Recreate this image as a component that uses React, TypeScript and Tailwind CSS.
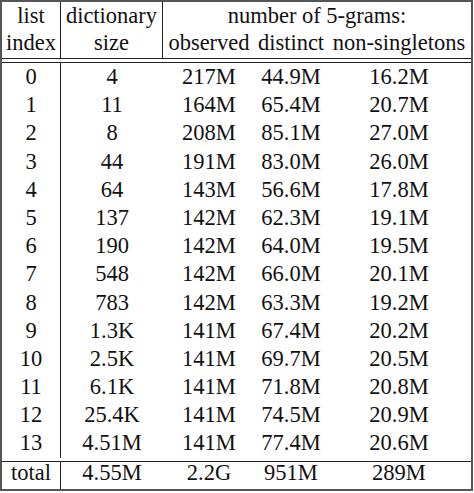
import React from "react";

const rows: string[][] = [
  ["0", "4", "217M", "44.9M", "16.2M"],
  ["1", "11", "164M", "65.4M", "20.7M"],
  ["2", "8", "208M", "85.1M", "27.0M"],
  ["3", "44", "191M", "83.0M", "26.0M"],
  ["4", "64", "143M", "56.6M", "17.8M"],
  ["5", "137", "142M", "62.3M", "19.1M"],
  ["6", "190", "142M", "64.0M", "19.5M"],
  ["7", "548", "142M", "66.0M", "20.1M"],
  ["8", "783", "142M", "63.3M", "19.2M"],
  ["9", "1.3K", "141M", "67.4M", "20.2M"],
  ["10", "2.5K", "141M", "69.7M", "20.5M"],
  ["11", "6.1K", "141M", "71.8M", "20.8M"],
  ["12", "25.4K", "141M", "74.5M", "20.9M"],
  ["13", "4.51M", "141M", "77.4M", "20.6M"],
];

export default function App() {
  return (
    <div className="w-[474px] h-[493px] bg-white text-[#111] text-[22.5px] font-[family-name:'Liberation_Serif',serif]">
      <div className="w-[473px] h-[491px] border-2 border-[#555] flex flex-col">
        {/* header */}
        <div className="flex h-[57px] border-b border-[#222] leading-[27px] shrink-0">
          <div className="w-[59px] border-r border-[#222] flex flex-col items-center">
            <span>list</span>
            <span>index</span>
          </div>
          <div className="w-[102px] border-r border-[#222] flex flex-col items-center">
            <span>dictionary</span>
            <span>size</span>
          </div>
          <div className="flex-1 flex flex-col">
            <div className="text-center">number of 5-grams:</div>
            <div className="grid grid-cols-[92px_72px_144px] text-center">
              <span>observed</span>
              <span>distinct</span>
              <span className="whitespace-nowrap">non-singletons</span>
            </div>
          </div>
        </div>
        <div className="h-[3px] shrink-0" />
        {/* body */}
        <div className="border-t border-[#222] pb-[3px] shrink-0">
          {rows.map((r) => (
            <div
              key={r[0]}
              className="grid grid-cols-[59px_102px_92px_72px_144px] h-[28.2px] leading-[28.2px] text-center"
            >
              <span className="border-r border-[#222]">{r[0]}</span>
              <span>{r[1]}</span>
              <span>{r[2]}</span>
              <span>{r[3]}</span>
              <span>{r[4]}</span>
            </div>
          ))}
        </div>
        {/* total */}
        <div className="border-t border-[#222] flex-1 grid grid-cols-[59px_102px_92px_72px_144px] text-center leading-[22.8px]">
          <span className="border-r border-[#222]">total</span>
          <span>4.55M</span>
          <span>2.2G</span>
          <span>951M</span>
          <span>289M</span>
        </div>
      </div>
    </div>
  );
}
